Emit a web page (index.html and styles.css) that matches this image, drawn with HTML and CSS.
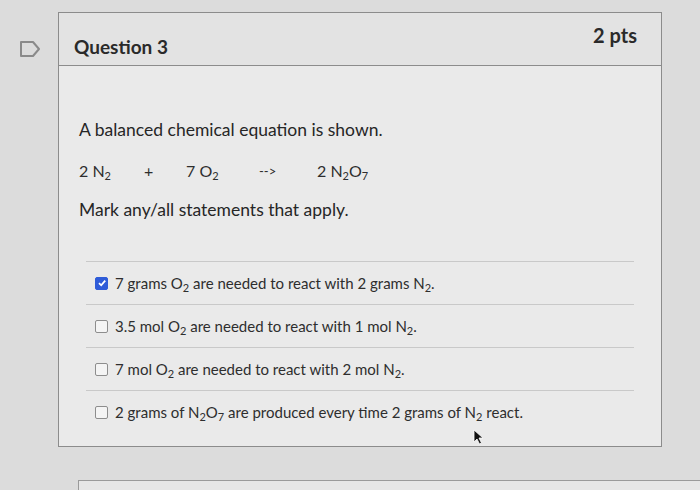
FILE: index.html
```html
<!DOCTYPE html>
<html>
<head>
<meta charset="utf-8">
<link rel="stylesheet" href="styles.css">
</head>
<body>
<div class="page">
  <div class="row">
    <div class="flag">
      <svg width="22" height="18" viewBox="0 0 22 18"><path d="M2 2 H14 L20 9 L14 16 H2 Z" fill="none" stroke="#8a8a8a" stroke-width="2" stroke-linejoin="round"/></svg>
    </div>
    <div class="card">
      <div class="card-head">
        <span class="q-title">Question 3</span>
        <span class="q-pts">2 pts</span>
      </div>
      <div class="card-body">
        <p class="lead">A balanced chemical equation is shown.</p>
        <p class="eq">
          <span class="t1">2 N<sub>2</sub></span>
          <span class="t2">+</span>
          <span class="t3">7 O<sub>2</sub></span>
          <span class="t4">--&gt;</span>
          <span class="t5">2 N<sub>2</sub>O<sub>7</sub></span>
        </p>
        <p class="lead">Mark any/all statements that apply.</p>
        <ul class="opts">
          <li class="opt"><span class="box checked"><svg width="10" height="10" viewBox="0 0 10 10"><path d="M2 5.2 L4.2 7.3 L8.2 2.6" fill="none" stroke="#fff" stroke-width="1.8"/></svg></span><span class="label">7 grams O<sub>2</sub> are needed to react with 2 grams N<sub>2</sub>.</span></li>
          <li class="opt"><span class="box"></span><span class="label">3.5 mol O<sub>2</sub> are needed to react with 1 mol N<sub>2</sub>.</span></li>
          <li class="opt"><span class="box"></span><span class="label">7 mol O<sub>2</sub> are needed to react with 2 mol N<sub>2</sub>.</span></li>
          <li class="opt"><span class="box"></span><span class="label">2 grams of N<sub>2</sub>O<sub>7</sub> are produced every time 2 grams of N<sub>2</sub> react.</span></li>
        </ul>
        <svg class="cursor" width="12" height="16" viewBox="0 0 12 16"><path d="M1 1 L1 13 L4 10 L6.5 15 L8.5 14 L6 9 L10 9 Z" fill="#111" stroke="#fff" stroke-width="0.8"/></svg>
      </div>
    </div>
  </div>
  <div class="next-card"></div>
</div>
</body>
</html>
```
FILE: styles.css
```css
html, body {
  margin: 0;
  padding: 0;
  height: 490px;
  overflow: hidden;
}
body {
  background: #dcdcdc;
  font-family: "Lato", "Open Sans", sans-serif;
  color: #262626;
}
.page {
  padding-top: 12px;
}
.row {
  display: flex;
  align-items: flex-start;
}
.flag {
  width: 58px;
  padding-top: 28px;
  display: flex;
  justify-content: center;
  padding-left: 2px;
  box-sizing: border-box;
}
.card {
  width: 604px;
  border: 1.5px solid #8c8c8c;
  background: #eaeaea;
  box-sizing: border-box;
}
.card-head {
  height: 52px;
  background: #e3e3e3;
  border-bottom: 1.5px solid #8c8c8c;
  display: flex;
  align-items: center;
  justify-content: space-between;
  padding: 0 24px 0 15px;
}
.q-title {
  font-size: 19px;
  font-weight: 700;
  color: #2a2a2a;
  padding-top: 14px;
}
.q-pts {
  font-size: 20px;
  font-weight: 700;
  color: #2a2a2a;
  padding-bottom: 8px;
}
.card-body {
  position: relative;
  padding: 54px 30px 13px 20px;
}
.card-body p {
  margin: 0;
}
.lead {
  font-size: 17.5px;
  line-height: 20px;
}
.eq {
  font-size: 16px;
  line-height: 20px;
  margin: 21px 0 19px !important;
  display: flex;
  color: #2e2e2e;
}
.eq sub {
  font-size: 11px;
  vertical-align: -3px;
}
.t1 { width: 65px; }
.t2 { width: 42px; }
.t3 { width: 73px; }
.t4 { width: 58px; font-size: 13px; }
sub {
  font-size: 11px;
  line-height: 0;
  vertical-align: -3px;
}
.opts {
  list-style: none;
  margin: 41px 0 0 7px;
  padding: 0;
  width: 548px;
}
.opt {
  height: 42px;
  border-top: 1.5px solid #c9c9c9;
  display: flex;
  align-items: center;
  font-size: 15px;
  color: #2e2e2e;
  padding-left: 9px;
}
.label {
  white-space: nowrap;
}
.box {
  width: 11px;
  height: 11px;
  border: 1px solid #8d8d8d;
  border-radius: 2px;
  background: #f4f4f4;
  margin-right: 7px;
  display: flex;
  align-items: center;
  justify-content: center;
  flex-shrink: 0;
}
.box.checked {
  background: #2f5cd8;
  border-color: #2f5cd8;
}
.cursor {
  position: absolute;
  left: 414px;
  bottom: 1px;
}
.next-card {
  margin: 33px 0 0 78px;
  height: 10px;
  border-top: 1.5px solid #9a9a9a;
  border-left: 1.5px solid #9a9a9a;
  background: #e6e6e6;
}
```
